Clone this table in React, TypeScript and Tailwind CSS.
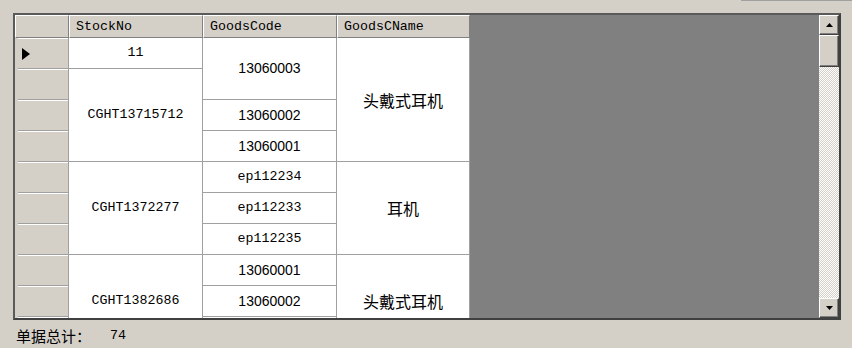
import React from "react";

const MONO = "font-['Liberation_Mono',monospace] text-[13.3px]";
const SANS = "font-['Liberation_Sans',Arial,sans-serif] text-[14px]";
const CJK = "font-['Noto_Sans_CJK_SC',sans-serif] text-[16px]";

type DataCell = { pos: string; text: string; font: string };

const dataCells: DataCell[] = [
  { pos: "col-start-2 row-start-2", text: "11", font: MONO },
  { pos: "col-start-2 row-start-3 row-span-3", text: "CGHT13715712", font: MONO },
  { pos: "col-start-2 row-start-6 row-span-3", text: "CGHT1372277", font: MONO },
  { pos: "col-start-2 row-start-9 row-span-3", text: "CGHT1382686", font: MONO },
  { pos: "col-start-3 row-start-2 row-span-2", text: "13060003", font: SANS },
  { pos: "col-start-3 row-start-4", text: "13060002", font: SANS },
  { pos: "col-start-3 row-start-5", text: "13060001", font: SANS },
  { pos: "col-start-3 row-start-6", text: "ep112234", font: MONO },
  { pos: "col-start-3 row-start-7", text: "ep112233", font: MONO },
  { pos: "col-start-3 row-start-8", text: "ep112235", font: MONO },
  { pos: "col-start-3 row-start-9", text: "13060001", font: SANS },
  { pos: "col-start-3 row-start-10", text: "13060002", font: SANS },
  { pos: "col-start-3 row-start-11", text: "", font: SANS },
  { pos: "col-start-4 row-start-2 row-span-4", text: "头戴式耳机", font: CJK },
  { pos: "col-start-4 row-start-6 row-span-3", text: "耳机", font: CJK },
  { pos: "col-start-4 row-start-9 row-span-3", text: "头戴式耳机", font: CJK },
];

const indicatorRows = [
  "row-start-2",
  "row-start-3",
  "row-start-4",
  "row-start-5",
  "row-start-6",
  "row-start-7",
  "row-start-8",
  "row-start-9",
  "row-start-10",
  "row-start-11",
];

const headers = [
  { pos: "col-start-2 row-start-1", text: "StockNo" },
  { pos: "col-start-3 row-start-1", text: "GoodsCode" },
  { pos: "col-start-4 row-start-1", text: "GoodsCName" },
];

function ArrowButton({ dir }: { dir: "up" | "down" }) {
  return (
    <div className="flex h-[20px] w-[20px] items-center justify-center border-t border-l border-t-white border-l-white border-r border-b border-r-[#404040] border-b-[#404040] bg-[#d4d0c8] shadow-[inset_-1px_-1px_0_#808080]">
      <svg width="7" height="4" viewBox="0 0 7 4">
        {dir === "up" ? (
          <polygon points="3.5,0 7,4 0,4" fill="#000" />
        ) : (
          <polygon points="0,0 7,0 3.5,4" fill="#000" />
        )}
      </svg>
    </div>
  );
}

export default function App() {
  return (
    <div className="relative h-[348px] w-[852px] overflow-hidden bg-[#d4d0c8]">
      {/* lower edge of the toolbar button above the grid */}
      <div className="flex h-[1px] justify-end">
        <div className="h-[1px] w-[111px] bg-[#a0a0a0]" />
      </div>

      {/* grid frame */}
      <div className="ml-[13px] mt-[12px] flex h-[307px] w-[828px] border-2 border-[#404040] border-t-[#5a5a5a] border-l-[#5a5a5a]">
        <div className="grid h-[303px] flex-1 grid-cols-[54px_134px_134px_133px_1fr] grid-rows-[23px_repeat(10,31px)] overflow-hidden bg-[#808080]">
          {/* header row */}
          <div className="col-start-1 row-start-1 border-t border-l border-t-white border-l-white border-r border-b border-r-[#808080] border-b-[#808080] bg-[#d4d0c8]" />
          {headers.map((h) => (
            <div
              key={h.text}
              className={`${h.pos} flex items-center border-t border-l border-t-white border-l-white border-r border-b border-r-[#808080] border-b-[#808080] bg-[#d4d0c8] pl-[6px] font-['Liberation_Mono',monospace] text-[13.3px] text-black`}
            >
              {h.text}
            </div>
          ))}

          {/* row indicators */}
          {indicatorRows.map((r, i) => (
            <div key={r} className={`${r} col-start-1 flex border-r border-r-[#a0a0a0] bg-[#d4d0c8] pl-[3px]`}>
              <div className="flex flex-1 items-center border-t border-t-white border-b border-b-[#a0a0a0] pl-[4px]">
                {i === 0 && (
                  <svg width="8" height="12" viewBox="0 0 8 12">
                    <polygon points="0,0 8,6 0,12" fill="#000" />
                  </svg>
                )}
              </div>
            </div>
          ))}

          {/* data cells */}
          {dataCells.map((c) => (
            <div
              key={c.pos}
              className={`${c.pos} ${c.font} flex items-center justify-center border-r border-b border-[#a0a0a0] bg-white text-black`}
            >
              {c.text}
            </div>
          ))}
        </div>

        {/* vertical scrollbar */}
        <div className="flex h-[303px] w-[20px] flex-col">
          <ArrowButton dir="up" />
          <div className="h-[32px] w-[20px] border-t border-l border-t-white border-l-white border-r border-b border-r-[#404040] border-b-[#404040] bg-[#d4d0c8] shadow-[inset_-1px_-1px_0_#808080]" />
          <div className="flex-1 bg-[repeating-conic-gradient(#d4d0c8_0%_25%,#ffffff_0%_50%)] bg-[length:2px_2px]" />
          <ArrowButton dir="down" />
        </div>
      </div>

      {/* footer total */}
      <div className="flex items-center pl-[16px] pt-[6px] leading-[20px] text-black">
        <span className="inline-block w-[94px] font-['Noto_Sans_CJK_SC',sans-serif] text-[15px]">单据总计：</span>
        <span className="font-['Liberation_Mono',monospace] text-[13.3px]">74</span>
      </div>
    </div>
  );
}
